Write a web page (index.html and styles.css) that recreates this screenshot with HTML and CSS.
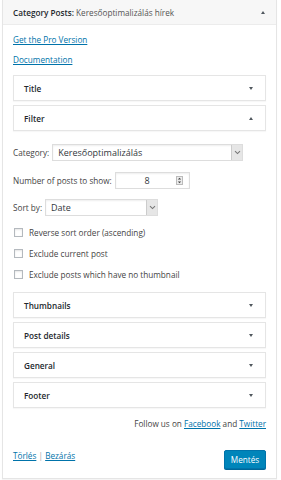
FILE: index.html
```html
<!DOCTYPE html>
<html>
<head>
<meta charset="utf-8">
<link rel="stylesheet" href="styles.css">
</head>
<body>
<div class="widget">
  <div class="widget-top">
    <h3 class="widget-title"><b>Category Posts:</b> <span class="instance">Keresőoptimalizálás hírek</span></h3>
    <span class="tri up"></span>
  </div>
  <div class="widget-inside">
    <p class="link-line"><a href="#">Get the Pro Version</a></p>
    <p class="link-line second"><a href="#">Documentation</a></p>

    <div class="section first"><span>Title</span><span class="tri down"></span></div>
    <div class="section"><span>Filter</span><span class="tri up"></span></div>

    <div class="filter-body">
      <div class="row cat-row">
        <label>Category:</label>
        <div class="select cat-select"><span class="sel-text">Keresőoptimalizálás</span><span class="sel-arrow"><svg width="7" height="5" viewBox="0 0 7 5"><path d="M1 1.2 L3.5 3.6 L6 1.2" fill="none" stroke="#777" stroke-width="1.1"/></svg></span></div>
      </div>
      <div class="row num-row">
        <label>Number of posts to show:</label>
        <div class="number"><span class="num-val">8</span><span class="spin"><svg width="7" height="9" viewBox="0 0 7 9"><rect x="0.5" y="0.5" width="6" height="8" fill="#ececec" stroke="#bbb"/><path d="M1.8 3.6 L3.5 1.8 L5.2 3.6Z M1.8 5.4 L3.5 7.2 L5.2 5.4Z" fill="#444"/></svg></span></div>
      </div>
      <div class="row sort-row">
        <label>Sort by:</label>
        <div class="select sort-select"><span class="sel-text">Date</span><span class="sel-arrow"><svg width="7" height="5" viewBox="0 0 7 5"><path d="M1 1.2 L3.5 3.6 L6 1.2" fill="none" stroke="#777" stroke-width="1.1"/></svg></span></div>
      </div>
      <div class="check"><span class="box"></span><span>Reverse sort order (ascending)</span></div>
      <div class="check"><span class="box"></span><span>Exclude current post</span></div>
      <div class="check"><span class="box"></span><span>Exclude posts which have no thumbnail</span></div>
    </div>

    <div class="section first"><span>Thumbnails</span><span class="tri down"></span></div>
    <div class="section"><span>Post details</span><span class="tri down"></span></div>
    <div class="section"><span>General</span><span class="tri down"></span></div>
    <div class="section"><span>Footer</span><span class="tri down"></span></div>

    <p class="follow">Follow us on <a href="#">Facebook</a> and <a href="#">Twitter</a></p>

    <div class="controls">
      <div class="ctrl-links"><a href="#">Törlés</a> <span class="sep">|</span> <a href="#">Bezárás</a></div>
      <button class="save">Mentés</button>
    </div>
  </div>
</div>
</body>
</html>
```

FILE: styles.css
```css
* { box-sizing: border-box; }
html, body { margin: 0; padding: 0; background: #fff; }
body {
  font-family: "Open Sans", "Noto Sans", sans-serif;
  font-size: 8.2px;
  color: #444;
  width: 281px;
  height: 480px;
  overflow: hidden;
}
a { color: #0073aa; text-decoration: underline; }

.widget {
  margin-left: 2px;
  width: 275px;
  height: 479px;
  border: 1px solid #e5e5e5;
  border-top: none;
  box-shadow: 0 1px 1px rgba(0,0,0,0.04);
  background: #fff;
}
.widget-top {
  height: 25px;
  background: #f7f7f7;
  border-bottom: 1px solid #ececec;
  display: flex;
  align-items: center;
  justify-content: space-between;
  padding: 0 11px 0 10px;
}
.widget-title {
  margin: 0;
  font-size: 8.2px;
  font-weight: 400;
  color: #23282d;
}
.widget-title b { font-weight: 600; }
.instance { color: #555; }

.tri { width: 0; height: 0; border-left: 2.5px solid transparent; border-right: 2.5px solid transparent; }
.tri.up { border-bottom: 3px solid #50575e; }
.tri.down { border-top: 3px solid #50575e; }

.widget-inside { padding: 0 10px; }
.link-line { margin: 9px 0 0; line-height: 12px; }
.link-line.second { margin-top: 8px; }

.section {
  height: 26px;
  border: 1px solid #e5e5e5;
  display: flex;
  align-items: center;
  justify-content: space-between;
  padding: 0 12px 0 10px;
  font-weight: 600;
  color: #23282d;
  margin-top: 4px;
  box-shadow: 0 1px 1px rgba(0,0,0,0.03);
}
.section.first { margin-top: 9px; }

.filter-body { padding-top: 13px; padding-bottom: 3px; }
.row { display: flex; align-items: center; height: 17px; }
.row label { margin-right: 3px; }
.num-row { margin-top: 11px; }
.sort-row { margin-top: 10px; }

.select {
  display: flex;
  height: 17px;
  border: 1px solid #ddd;
  background: #fff;
  box-shadow: inset 0 1px 2px rgba(0,0,0,0.07);
}
.sel-text { flex: 1; padding-left: 5px; line-height: 15px; font-size: 9px; color: #32373c; }
.sel-arrow {
  width: 11px;
  background: #e6e6e6;
  border-left: 1px solid #ccc;
  display: flex;
  align-items: center;
  justify-content: center;
}
.cat-select { width: 191px; }
.sort-select { width: 113px; }

.number {
  width: 75px;
  height: 17px;
  border: 1px solid #ddd;
  box-shadow: inset 0 1px 2px rgba(0,0,0,0.07);
  display: flex;
  align-items: center;
  justify-content: flex-end;
  padding-right: 6px;
}
.num-val { font-size: 9px; color: #32373c; margin-right: 26px; }
.spin { display: flex; }

.check { display: flex; align-items: center; height: 12px; margin-top: 9px; }
.sort-row + .check { margin-top: 10px; }
.box {
  width: 9px; height: 9px;
  border: 1px solid #b4b9be;
  background: #fff;
  box-shadow: inset 0 1px 2px rgba(0,0,0,0.1);
  margin: 0 6px 0 1px;
}

.follow { text-align: right; margin: 10px 0 0; line-height: 12px; }

.controls {
  display: flex;
  justify-content: space-between;
  align-items: center;
  margin-top: 20px;
}
.ctrl-links { padding-bottom: 8px; }
.sep { color: #a0a5aa; }
.save {
  font-family: inherit;
  font-size: 8.2px;
  color: #fff;
  background: #0085ba;
  border: 1px solid #0073aa;
  border-radius: 2px;
  box-shadow: 0 1px 0 #006799;
  height: 19px;
  width: 42px;
  padding: 0;
}
```
